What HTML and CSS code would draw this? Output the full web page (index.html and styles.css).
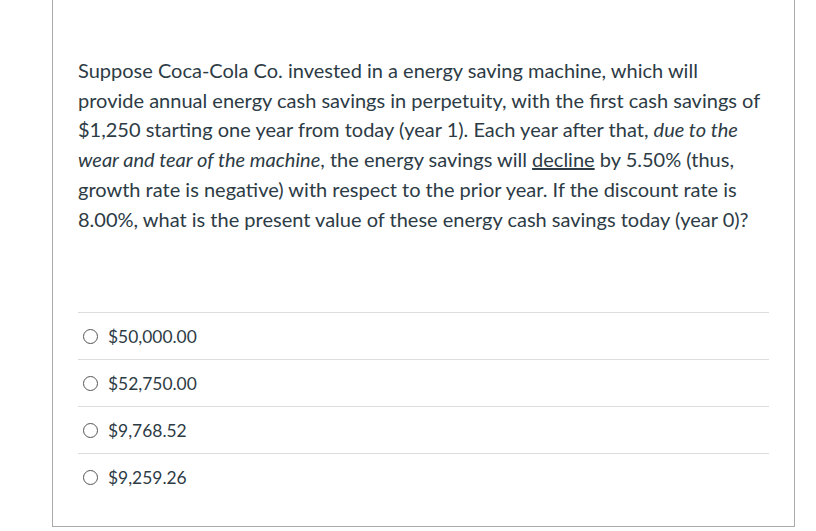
FILE: index.html
```html
<!DOCTYPE html>
<html>
<head>
<meta charset="utf-8">
<link rel="stylesheet" href="styles.css">
</head>
<body>
<div class="card">
  <div class="question">
    <p>Suppose Coca-Cola Co. invested in a energy saving machine, which will provide annual energy cash savings in perpetuity, with the first cash savings of $1,250 starting one year from today (year 1). Each year after that, <em>due to the wear and tear of the machine</em>, the energy savings will <u>decline</u> by 5.50% (thus, growth rate is negative) with respect to the prior year. If the discount rate is 8.00%, what is the present value of these energy cash savings today (year 0)?</p>
  </div>
  <div class="answers">
    <label class="answer"><span class="radio"></span><span class="text">$50,000.00</span></label>
    <label class="answer"><span class="radio"></span><span class="text">$52,750.00</span></label>
    <label class="answer"><span class="radio"></span><span class="text">$9,768.52</span></label>
    <label class="answer"><span class="radio"></span><span class="text">$9,259.26</span></label>
  </div>
</div>
</body>
</html>
```

FILE: styles.css
```css
html, body {
  margin: 0;
  padding: 0;
  background: #ffffff;
}
body {
  font-family: Lato, "Liberation Sans", sans-serif;
  color: #2d3b45;
}
.card {
  margin: -10px 0 0 52px;
  width: 743px;
  height: 537px;
  border: 1px solid #aaaaaa;
  padding: 0 25px;
  box-sizing: border-box;
}
.question {
  padding-top: 65px;
}
.question p {
  margin: 0;
  max-width: 686px;
  font-size: 20px;
  line-height: 29.7px;
}
.question em {
  font-style: italic;
}
.answers {
  margin-top: 78px;
  display: flex;
  flex-direction: column;
}
.answer {
  display: flex;
  align-items: center;
  height: 46px;
  border-top: 1px solid #dddddd;
  padding-left: 5px;
}
.radio {
  width: 15px;
  height: 15px;
  border: 1px solid #555555;
  border-radius: 50%;
  box-sizing: border-box;
  margin-right: 10px;
  flex: none;
}
.text {
  font-size: 17.4px;
}
```
